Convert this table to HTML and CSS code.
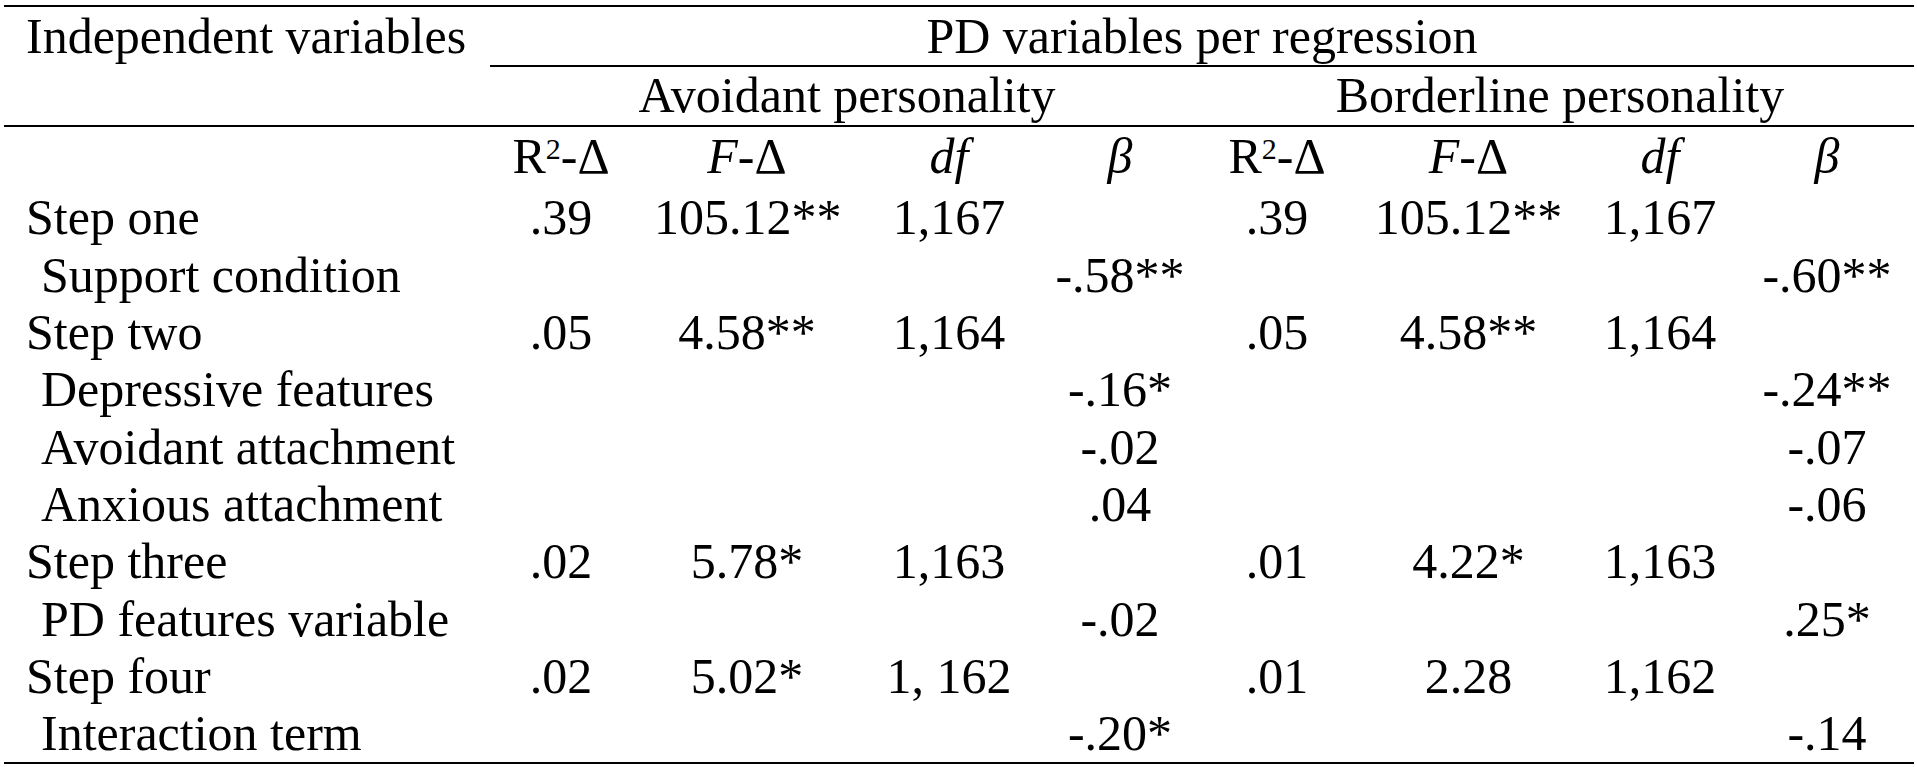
FILE: index.html
```html
<!DOCTYPE html>
<html lang="en">
<head>
<meta charset="utf-8">
<title>PD variables per regression</title>
<link rel="stylesheet" href="styles.css">
</head>
<body>
<div class="regtable">
  <div class="row hd1">
    <div class="label">Independent variables</div>
    <div class="span-all">PD variables per regression</div>
  </div>
  <div class="row hd2">
    <div class="label"></div>
    <div class="span-a">Avoidant personality</div>
    <div class="span-b">Borderline personality</div>
  </div>
  <div class="row hd3">
    <div class="label"></div>
    <div class="c1">R<span class="sup">2</span>-Δ</div>
    <div class="c2"><i>F</i>-Δ</div>
    <div class="c3"><i>df</i></div>
    <div class="c4"><i>β</i></div>
    <div class="c5">R<span class="sup">2</span>-Δ</div>
    <div class="c6"><i>F</i>-Δ</div>
    <div class="c7"><i>df</i></div>
    <div class="c8"><i>β</i></div>
  </div>

  <div class="row">
    <div class="label">Step one</div>
    <div class="c1">.39</div><div class="c2">105.12**</div><div class="c3">1,167</div><div class="c4"></div>
    <div class="c5">.39</div><div class="c6">105.12**</div><div class="c7">1,167</div><div class="c8"></div>
  </div>
  <div class="row">
    <div class="label sub">Support condition</div>
    <div class="c1"></div><div class="c2"></div><div class="c3"></div><div class="c4">-.58**</div>
    <div class="c5"></div><div class="c6"></div><div class="c7"></div><div class="c8">-.60**</div>
  </div>
  <div class="row">
    <div class="label">Step two</div>
    <div class="c1">.05</div><div class="c2">4.58**</div><div class="c3">1,164</div><div class="c4"></div>
    <div class="c5">.05</div><div class="c6">4.58**</div><div class="c7">1,164</div><div class="c8"></div>
  </div>
  <div class="row">
    <div class="label sub">Depressive features</div>
    <div class="c1"></div><div class="c2"></div><div class="c3"></div><div class="c4">-.16*</div>
    <div class="c5"></div><div class="c6"></div><div class="c7"></div><div class="c8">-.24**</div>
  </div>
  <div class="row">
    <div class="label sub">Avoidant attachment</div>
    <div class="c1"></div><div class="c2"></div><div class="c3"></div><div class="c4">-.02</div>
    <div class="c5"></div><div class="c6"></div><div class="c7"></div><div class="c8">-.07</div>
  </div>
  <div class="row">
    <div class="label sub">Anxious attachment</div>
    <div class="c1"></div><div class="c2"></div><div class="c3"></div><div class="c4">.04</div>
    <div class="c5"></div><div class="c6"></div><div class="c7"></div><div class="c8">-.06</div>
  </div>
  <div class="row">
    <div class="label">Step three</div>
    <div class="c1">.02</div><div class="c2">5.78*</div><div class="c3">1,163</div><div class="c4"></div>
    <div class="c5">.01</div><div class="c6">4.22*</div><div class="c7">1,163</div><div class="c8"></div>
  </div>
  <div class="row">
    <div class="label sub">PD features variable</div>
    <div class="c1"></div><div class="c2"></div><div class="c3"></div><div class="c4">-.02</div>
    <div class="c5"></div><div class="c6"></div><div class="c7"></div><div class="c8">.25*</div>
  </div>
  <div class="row">
    <div class="label">Step four</div>
    <div class="c1">.02</div><div class="c2">5.02*</div><div class="c3">1, 162</div><div class="c4"></div>
    <div class="c5">.01</div><div class="c6">2.28</div><div class="c7">1,162</div><div class="c8"></div>
  </div>
  <div class="row">
    <div class="label sub">Interaction term</div>
    <div class="c1"></div><div class="c2"></div><div class="c3"></div><div class="c4">-.20*</div>
    <div class="c5"></div><div class="c6"></div><div class="c7"></div><div class="c8">-.14</div>
  </div>
</div>
</body>
</html>
```

FILE: styles.css
```css
html, body {
  margin: 0;
  padding: 0;
  background: #ffffff;
}

.regtable {
  margin: 5px 0 0 4px;
  width: 1910px;
  border-top: 2px solid #000;
  border-bottom: 2px solid #000;
  font-family: "Liberation Serif", "Times New Roman", serif;
  font-size: 50px;
  line-height: 57.3px;
  color: #000;
}

.row {
  display: grid;
  grid-template-columns: 486px 164px 194px 187px 164px 174px 191px 180px 170px;
}

.row > div {
  text-align: center;
  white-space: nowrap;
}

.row > .label {
  text-align: left;
  padding-left: 22px;
}

.row > .label.sub {
  padding-left: 37px;
}

.hd1 {
  padding-top: 1px;
}

.span-all {
  grid-column: 2 / 10;
  border-bottom: 2px solid #000;
}

.hd2 {
  border-bottom: 2px solid #000;
}

.span-a {
  grid-column: 2 / 6;
  padding-left: 5px;
}

.span-b {
  grid-column: 6 / 10;
  padding-left: 7px;
}

.hd3 {
  padding-top: 1px;
  padding-bottom: 4.6px;
}

.sup {
  display: inline-block;
  font-size: 30px;
  line-height: 0;
  vertical-align: 14px;
}

/* nudge each column's centred text to the reference's column centres */
.row > .c1 { padding-right: 22px; }
.row > .c2 { padding-right: 8px; }
.row > .c3 { padding-left: 15px; }
.row > .c4 { padding-left: 6px; }
.row > .c5 { padding-right: 18px; }
.row > .c7 { padding-left: 12px; }
.row > .c8 { padding-right: 4px; }
```
